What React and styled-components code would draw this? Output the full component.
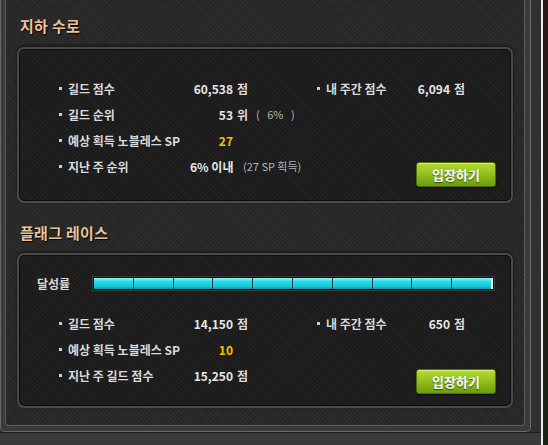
import React from 'react'
import styled, { createGlobalStyle } from 'styled-components'

const GlobalStyle = createGlobalStyle`
  html, body {
    margin: 0;
    padding: 0;
    background: #1a1a1a;
  }
  body {
    font-family: "Noto Sans CJK KR", "Noto Sans", sans-serif;
    -webkit-font-smoothing: antialiased;
  }
`

const texture = `
  repeating-linear-gradient(45deg, rgba(255,255,255,0.025) 0 1px, transparent 1px 3px),
  repeating-linear-gradient(-45deg, rgba(0,0,0,0.12) 0 1px, transparent 1px 3px)
`

const Page = styled.div`
  display: flex;
  width: 548px;
  height: 445px;
  overflow: hidden;
`

const LeftCol = styled.div`
  display: flex;
  flex-direction: column;
  width: 541px;
`

const FrameRow = styled.div`
  display: flex;
  height: 432px;
  background: #303030;
`

const Frame = styled.div`
  width: 531px;
  box-sizing: border-box;
  border: 1px solid #6a6a6a;
  border-top: none;
  border-radius: 0 0 5px 5px;
  padding: 0 5px 5px 4px;
  background: #3a3a3a;
`

const Inner = styled.div`
  display: flow-root;
  height: 100%;
  box-sizing: border-box;
  border: 1px solid #5c5c5c;
  border-top: none;
  border-radius: 0 0 4px 4px;
  padding: 0 0 0 11px;
  background-color: #292929;
  background-image: ${texture};
`

const BottomStrip = styled.div`
  flex: 1;
  background: #3a3a3a;
  border-top: 1px solid #1e1e1e;
`

const WhiteLine = styled.div`
  width: 2px;
  background: #ececec;
`

const Outside = styled.div`
  flex: 1;
  background: linear-gradient(#2a1a18, #1c2418);
`

const Title = styled.h2`
  margin: ${p => p.$top}px 0 0 3px;
  height: 18px;
  line-height: 18px;
  font-size: 15px;
  font-weight: 700;
  color: #e9c39b;
  text-shadow: 1px 1px 1px #000;
  letter-spacing: 0.3px;
`

const Panel = styled.div`
  box-sizing: border-box;
  width: 496px;
  height: ${p => p.$h}px;
  margin-top: ${p => p.$top}px;
  border: 2px solid #4a4a4a;
  border-radius: 7px;
  background-color: #1d1d1d;
  background-image: ${texture};
  box-shadow: inset 0 0 0 1px #0b0b0b, 0 -1px 3px rgba(0, 0, 0, 0.6);
  padding: ${p => p.$pad}px 15px 0 40px;
`

const StatGrid = styled.div`
  display: grid;
  grid-template-columns: 258px 1fr;
  grid-auto-rows: 26px;
  margin-top: ${p => p.$top || 0}px;
`

const Stat = styled.div`
  display: flex;
  align-items: center;
  height: 26px;
  color: #dadada;
  font-size: 12px;
  font-weight: 700;
  white-space: nowrap;
`

const Bullet = styled.span`
  width: 3px;
  height: 3px;
  background: #cfcfcf;
  margin-right: 6px;
  flex-shrink: 0;
`

const Label = styled.span`
  width: ${p => p.$w}px;
`

const Num = styled.span`
  width: ${p => p.$w}px;
  text-align: right;
  font-size: 12px;
  color: ${p => (p.$gold ? '#f2c200' : '#e6e6e6')};
`

const Unit = styled.span`
  margin-left: 4px;
  color: #dcdcdc;
`

const Note = styled.span`
  margin-left: ${p => p.$gap}px;
  font-weight: 400;
  color: #b4b4b4;
  font-size: 11px;
  word-spacing: ${p => p.$ws || 0}px;
`

const ButtonCell = styled.div`
  grid-column: 2;
  display: flex;
  justify-content: flex-end;
  padding-top: ${p => p.$top}px;
`

const EnterButton = styled.button`
  width: 80px;
  height: 25px;
  border: 1px solid #4f6e08;
  border-radius: 3px;
  background: linear-gradient(#b5dc34, #8fbf1c 50%, #6f9c0d);
  box-shadow: inset 0 1px 0 #d4f070, 0 1px 1px rgba(0, 0, 0, 0.7);
  color: #fff;
  font-family: inherit;
  font-size: 13px;
  font-weight: 700;
  text-shadow: 0 1px 1px rgba(0, 0, 0, 0.6);
  padding: 0;
  cursor: pointer;
`

const ProgressRow = styled.div`
  display: flex;
  align-items: center;
  margin-left: -22px;
  height: 13px;
  color: #dadada;
  font-size: 12px;
  font-weight: 700;
`

const ProgressLabel = styled.span`
  width: 56px;
`

const Bar = styled.div`
  display: flex;
  width: 401px;
  height: 13px;
  box-sizing: border-box;
  border: 1px solid #0a0a0a;
  box-shadow: 0 0 0 1px #3c3c3c;
  background: #0a0a0a;
`

const Segment = styled.div`
  flex: 1;
  border-right: 1px solid #0b3c44;
  background: linear-gradient(#8ff6fb, #29dcea 30%, #19c8d8 75%, #0e9aa8);
  &:last-child {
    border-right: 2px solid #e8ffff;
  }
`

const ROWS_A = [
  ['길드 점수', '60,538', '점', null, false],
  ['길드 순위', '53', '위', '( 6% )', false],
  ['예상 획득 노블레스 SP', '27', null, null, true],
  ['지난 주 순위', '6% 이내', null, '(27 SP 획득)', false],
]

const ROWS_B = [
  ['길드 점수', '14,150', '점'],
  ['예상 획득 노블레스 SP', '10', null, true],
  ['지난 주 길드 점수', '15,250', '점'],
]

const LeftStat = ({ label, value, unit, note, gold }) => (
  <Stat>
    <Bullet />
    <Label $w={122}>{label}</Label>
    <Num $w={43} $gold={gold}>{value}</Num>
    {unit && <Unit>{unit}</Unit>}
    {note && (
      <Note $gap={unit ? 8 : 10} $ws={unit ? 5 : 0}>
        {note}
      </Note>
    )}
  </Stat>
)

const RightStat = ({ value }) => (
  <Stat>
    <Bullet />
    <Label $w={79}>내 주간 점수</Label>
    <Num $w={45}>{value}</Num>
    <Unit>점</Unit>
  </Stat>
)

export default function App() {
  return (
    <Page>
      <GlobalStyle />
      <LeftCol>
        <FrameRow>
          <Frame>
            <Inner>
              <Title $top={17}>지하 수로</Title>
              <Panel $h={156} $top={12} $pad={26}>
                <StatGrid>
                  <LeftStat label={ROWS_A[0][0]} value={ROWS_A[0][1]} unit={ROWS_A[0][2]} />
                  <RightStat value="6,094" />
                  {ROWS_A.slice(1).map(([label, value, unit, note, gold], i) => (
                    <React.Fragment key={label}>
                      <LeftStat label={label} value={value} unit={unit} note={note} gold={gold} />
                      {i === 2 ? (
                        <ButtonCell $top={9}>
                          <EnterButton>입장하기</EnterButton>
                        </ButtonCell>
                      ) : (
                        <div />
                      )}
                    </React.Fragment>
                  ))}
                </StatGrid>
              </Panel>

              <Title $top={21}>플래그 레이스</Title>
              <Panel $h={155} $top={11} $pad={22}>
                <ProgressRow>
                  <ProgressLabel>달성률</ProgressLabel>
                  <Bar>
                    {Array.from({ length: 10 }).map((_, i) => (
                      <Segment key={i} />
                    ))}
                  </Bar>
                </ProgressRow>
                <StatGrid $top={20}>
                  <LeftStat label={ROWS_B[0][0]} value={ROWS_B[0][1]} unit={ROWS_B[0][2]} />
                  <RightStat value="650" />
                  <LeftStat label={ROWS_B[1][0]} value={ROWS_B[1][1]} gold />
                  <div />
                  <LeftStat label={ROWS_B[2][0]} value={ROWS_B[2][1]} unit={ROWS_B[2][2]} />
                  <ButtonCell $top={7}>
                    <EnterButton>입장하기</EnterButton>
                  </ButtonCell>
                </StatGrid>
              </Panel>
            </Inner>
          </Frame>
        </FrameRow>
        <BottomStrip />
      </LeftCol>
      <WhiteLine />
      <Outside />
    </Page>
  )
}
